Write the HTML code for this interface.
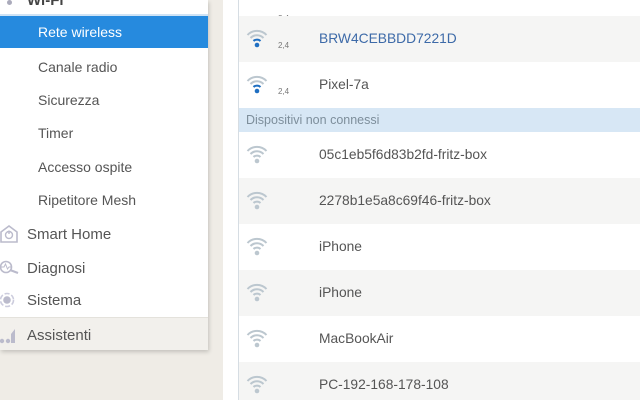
<!DOCTYPE html>
<html><head><meta charset="utf-8"><style>
*{margin:0;padding:0;box-sizing:border-box}
html{width:640px;height:400px;overflow:hidden}
body{width:640px;height:400px;overflow:hidden;background:#efece6;font-family:"Liberation Sans",sans-serif;position:relative}
#side{position:absolute;left:0;top:0;width:208px;height:350px;background:#fff;box-shadow:1px 2px 4px rgba(0,0,0,.18)}
.it{position:absolute;left:0;width:208px;height:33px;line-height:33px;color:#555;font-size:14px}
.sub{padding-left:38px}
.main{padding-left:27px;font-size:15px}
.sel{background:#268ade;color:#fff}
#strip{position:absolute;left:223px;top:0;width:15px;height:400px;background:#fff}
#line{position:absolute;left:238px;top:0;width:1px;height:400px;background:#d6dde3}
#content{position:absolute;left:239px;top:0;width:401px;height:400px;background:#fff;overflow:hidden}
.row{position:absolute;left:0;width:401px;height:46px;line-height:46px;font-size:13.8px;color:#555}
.g{background:#f5f5f4}
.row .n{position:absolute;left:80px}
.row svg{position:absolute;left:7px;top:12px}
.band{position:absolute;left:39px;top:7px;font-size:8px;color:#777}
.hdr{position:absolute;top:108px;left:0;width:401px;height:24px;line-height:24px;background:#d7e7f5;color:#7d8e9b;font-size:12.5px;padding-left:7px}
.ic{position:absolute;left:0;}
</style></head><body>
<div id="side">
<div class="it main" style="top:-16px;font-weight:bold;color:#444">Wi-Fi<span style="position:absolute;left:186px;color:#777;font-weight:normal">⌃</span></div>
<div style="position:absolute;left:7px;top:0;width:5px;height:5px;border-radius:50%;background:#aab"></div>
<div style="position:absolute;top:14px;left:0;width:208px;height:2px;background:#cfe3f5"></div>
<div class="it sub sel" style="top:16px;height:32px;line-height:33px">Rete wireless</div>
<div class="it sub" style="top:51px">Canale radio</div>
<div class="it sub" style="top:84px">Sicurezza</div>
<div class="it sub" style="top:117px">Timer</div>
<div class="it sub" style="top:151px">Accesso ospite</div>
<div class="it sub" style="top:184px">Ripetitore Mesh</div>
<div class="it main" style="top:218px">Smart Home</div>
<div class="it main" style="top:252px">Diagnosi</div>
<div class="it main" style="top:284px">Sistema</div>
<div class="it main" style="top:317px;background:#f2f0ec;border-top:1px solid #e4e2dc;line-height:35px">Assistenti</div>
<svg class="ic" style="top:223px" width="20" height="22"><path d="M1 9 L9 3 L17 9 V19 H1 Z" fill="none" stroke="#bbc" stroke-width="1.6"/><circle cx="9" cy="12" r="3.5" fill="none" stroke="#bbc" stroke-width="1.4"/><path d="M9 7.5 V11" stroke="#bbc" stroke-width="1.4"/></svg>
<svg class="ic" style="top:258px" width="22" height="20"><circle cx="6" cy="9" r="5.5" fill="none" stroke="#bbc" stroke-width="1.6"/><path d="M10 12 L18 15" stroke="#bbc" stroke-width="2.2"/><path d="M1 9 L4 9 L5.5 6 L7.5 11 L9 9 L11 9" fill="none" stroke="#bbc" stroke-width="1"/></svg>
<svg class="ic" style="top:290px" width="18" height="20"><circle cx="7" cy="10" r="6.5" fill="none" stroke="#ccd" stroke-width="1.6" stroke-dasharray="5 2"/><circle cx="7" cy="10" r="3.8" fill="#bbc"/></svg>
<svg class="ic" style="top:325px" width="18" height="20"><circle cx="2" cy="16" r="2.2" fill="#bbc"/><circle cx="8" cy="16" r="2.2" fill="#bbc"/><path d="M11 9 L15 4 V18 H11 Z" fill="#bbc"/></svg>
</div>
<div id="strip"></div><div id="line"></div>
<div id="content">
<svg width="0" height="0" style="position:absolute"><defs>
<g id="wg"><path d="M1.5 7 A13 13 0 0 1 20.5 7" fill="none" stroke="#bcc7cf" stroke-width="2"/><path d="M4.5 10 A9 9 0 0 1 17.5 10" fill="none" stroke="#bcc7cf" stroke-width="2"/><path d="M7.5 13 A5 5 0 0 1 14.5 13" fill="none" stroke="#bcc7cf" stroke-width="2"/><circle cx="11" cy="17" r="2.3" fill="#bcc7cf"/></g>
<g id="wb"><path d="M1.5 7 A13 13 0 0 1 20.5 7" fill="none" stroke="#bcc7cf" stroke-width="2"/><path d="M4.5 10 A9 9 0 0 1 17.5 10" fill="none" stroke="#bcc7cf" stroke-width="2"/><path d="M7.5 13 A5 5 0 0 1 14.5 13" fill="none" stroke="#1f6fc2" stroke-width="2"/><circle cx="11" cy="17" r="2.3" fill="#1f6fc2"/></g>
</defs></svg>
<div class="row" style="top:-30px"><span class="band" style="top:26px">2,4</span></div>
<div class="row g" style="top:16px"><svg width="22" height="22"><use href="#wb"/></svg><span class="band" style="top:7px">2,4</span><span class="n" style="color:#3d6aa8">BRW4CEBBDD7221D</span></div>
<div class="row" style="top:62px"><svg width="22" height="22"><use href="#wb"/></svg><span class="band" style="top:7px">2,4</span><span class="n">Pixel-7a</span></div>
<div class="hdr">Dispositivi non connessi</div>
<div class="row" style="top:132px"><svg width="22" height="22"><use href="#wg"/></svg><span class="n">05c1eb5f6d83b2fd-fritz-box</span></div>
<div class="row g" style="top:178px"><svg width="22" height="22"><use href="#wg"/></svg><span class="n">2278b1e5a8c69f46-fritz-box</span></div>
<div class="row" style="top:224px"><svg width="22" height="22"><use href="#wg"/></svg><span class="n">iPhone</span></div>
<div class="row g" style="top:270px"><svg width="22" height="22"><use href="#wg"/></svg><span class="n">iPhone</span></div>
<div class="row" style="top:316px"><svg width="22" height="22"><use href="#wg"/></svg><span class="n">MacBookAir</span></div>
<div class="row g" style="top:362px"><svg width="22" height="22"><use href="#wg"/></svg><span class="n">PC-192-168-178-108</span></div>
</div>
</body></html>
